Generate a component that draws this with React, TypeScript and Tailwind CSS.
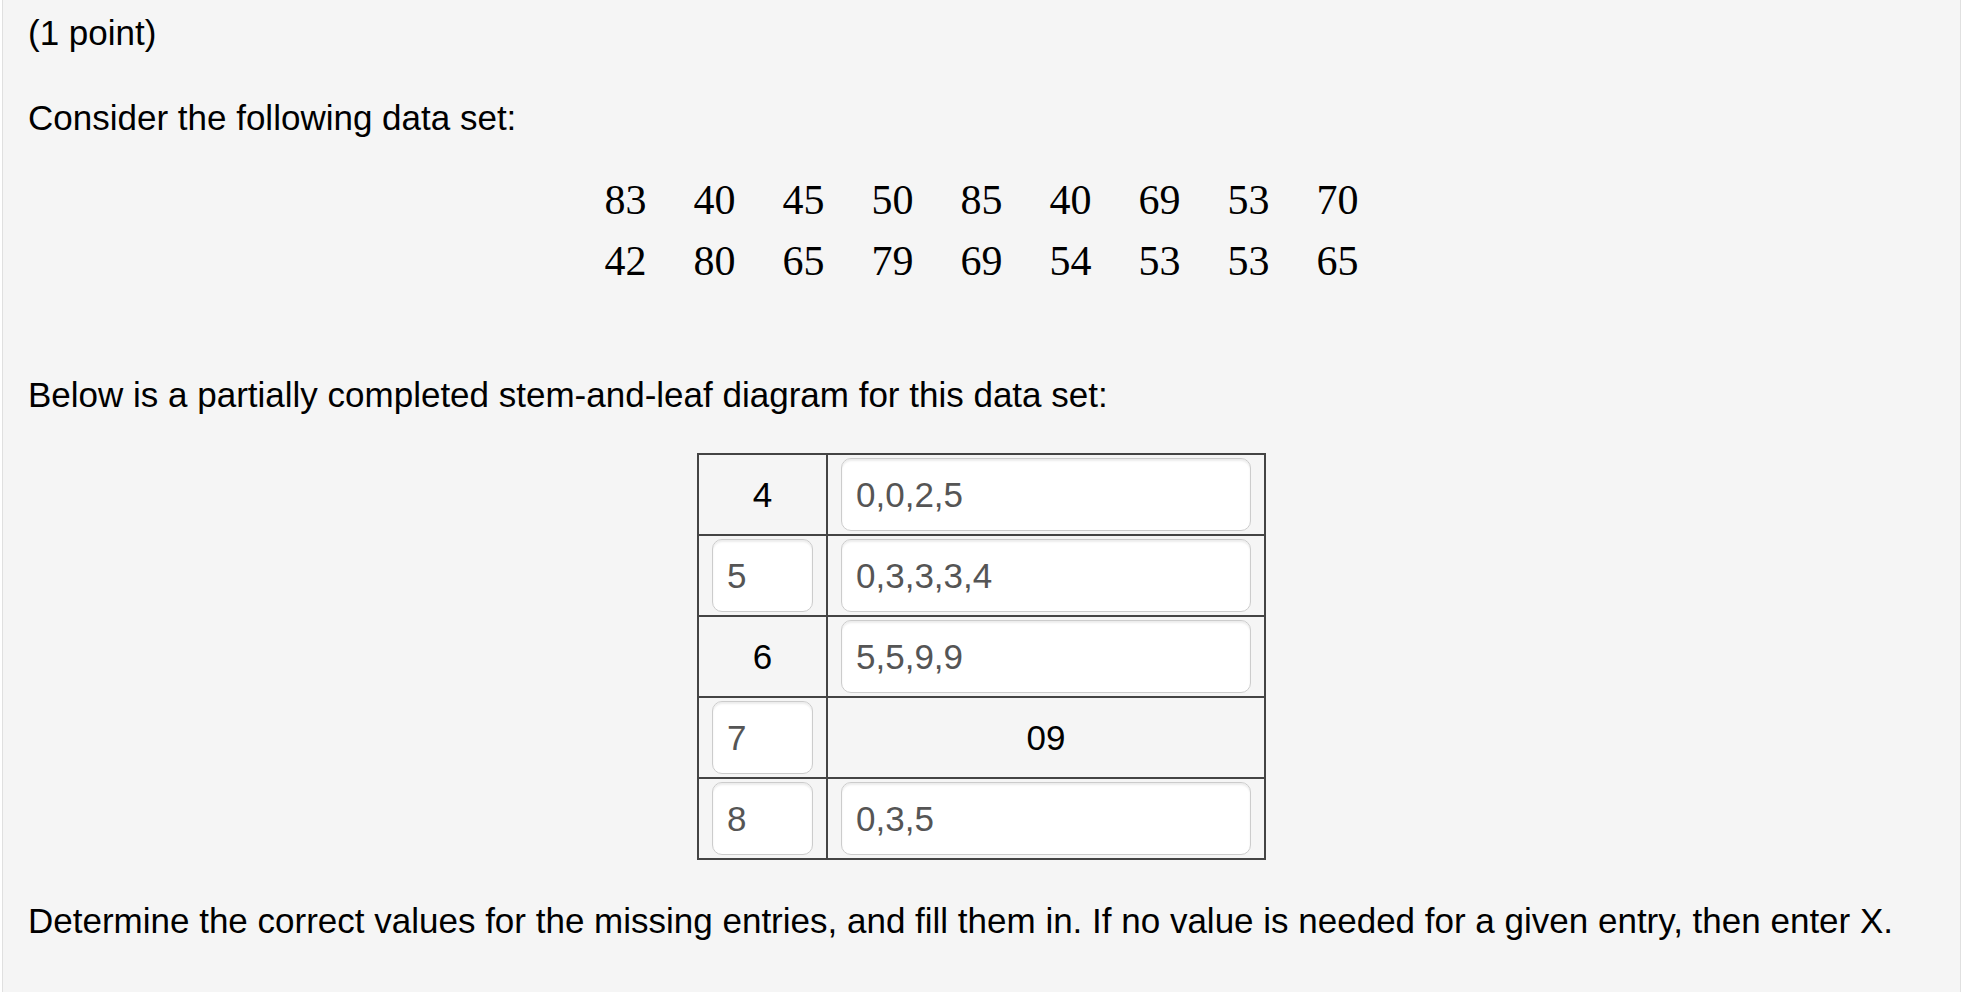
const firstRow = ['83', '40', '45', '50', '85', '40', '69', '53', '70'];
const secondRow = ['42', '80', '65', '79', '69', '54', '53', '53', '65'];

type StemRow = {
  stem: string;
  stemInput: boolean;
  leaves: string;
  leavesInput: boolean;
};

const rows: StemRow[] = [
  { stem: '4', stemInput: false, leaves: '0,0,2,5', leavesInput: true },
  { stem: '5', stemInput: true, leaves: '0,3,3,3,4', leavesInput: true },
  { stem: '6', stemInput: false, leaves: '5,5,9,9', leavesInput: true },
  { stem: '7', stemInput: true, leaves: '09', leavesInput: false },
  { stem: '8', stemInput: true, leaves: '0,3,5', leavesInput: true },
];

function AnswerBox({ value, wide }: { value: string; wide?: boolean }) {
  return (
    <input
      type="text"
      defaultValue={value}
      className={`block h-[73px] rounded-[10px] border border-[#cccccc] bg-white px-[14px] text-[35px] leading-[50px] text-[#555555] shadow-[inset_0_2px_2px_rgba(0,0,0,0.075)] outline-none ${
        wide ? 'w-[410px]' : 'w-[101px]'
      }`}
    />
  );
}

function NumberRow({ values }: { values: string[] }) {
  return (
    <div className="flex justify-center gap-[47px] leading-[61px]">
      {values.map((v, i) => (
        <span key={i} className="w-[42px] text-center">
          {v}
        </span>
      ))}
    </div>
  );
}

export default function App() {
  return (
    <div className="h-[992px] overflow-hidden bg-white">
      <div className="ml-[2px] h-[992px] w-[1959px] border-x border-[#e0e0e0] bg-[#f5f5f5] px-[25px] pt-[8px] font-['Liberation_Sans',Arial,sans-serif] text-[35px] leading-[50px] text-black">
        <p>(1 point)</p>
        <p className="mt-[35px]">Consider the following data set:</p>

        <div className="mt-[27px] font-['Liberation_Serif','Times_New_Roman',serif] text-[42px]">
          <NumberRow values={firstRow} />
          <NumberRow values={secondRow} />
        </div>

        <p className="mt-[78px]">Below is a partially completed stem-and-leaf diagram for this data set:</p>

        <table className="mx-auto mt-[33px] border-collapse">
          <tbody>
            {rows.map((row) => (
              <tr key={row.stem} className="h-[81px]">
                <td className="w-[129px] border-2 border-[#444444] px-[13px] py-[3px] text-center align-middle">
                  {row.stemInput ? <AnswerBox value={row.stem} /> : row.stem}
                </td>
                <td className="w-[437px] border-2 border-[#444444] px-[13px] py-[3px] text-center align-middle">
                  {row.leavesInput ? <AnswerBox value={row.leaves} wide /> : row.leaves}
                </td>
              </tr>
            ))}
          </tbody>
        </table>

        <p className="mt-[36px]">
          Determine the correct values for the missing entries, and fill them in. If no value is needed for a given
          entry, then enter X.
        </p>
      </div>
    </div>
  );
}
